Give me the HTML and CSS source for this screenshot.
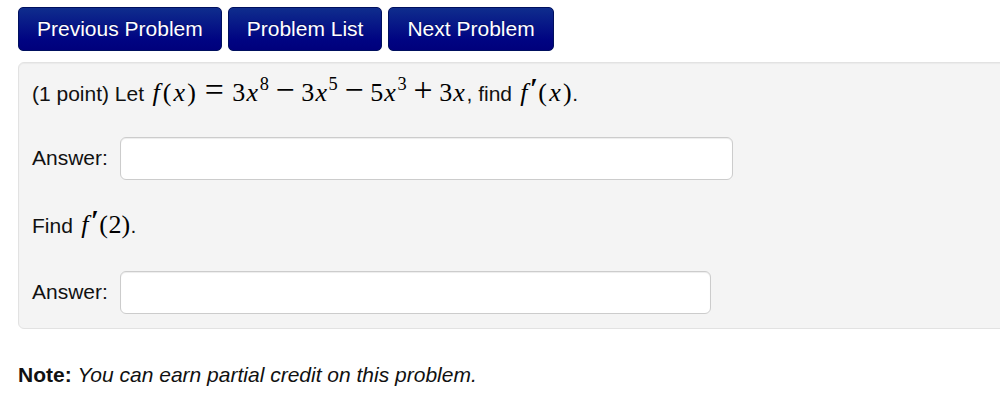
FILE: index.html
```html
<!DOCTYPE html>
<html>
<head>
<meta charset="utf-8">
<link rel="stylesheet" href="styles.css">
</head>
<body>
<div class="nav">
  <button class="btn">Previous Problem</button>
  <button class="btn">Problem List</button>
  <button class="btn">Next Problem</button>
</div>
<div class="well">
  <div class="line first">(1 point) Let <span class="math"><span class="mi f">f</span><span class="mp">(</span><span class="mi x">x</span><span class="mp">)</span><span class="rel">=</span><span class="mn">3</span><span class="mi x">x</span><span class="sup">8</span><span class="bin">−</span><span class="mn">3</span><span class="mi x">x</span><span class="sup">5</span><span class="bin">−</span><span class="mn">5</span><span class="mi x">x</span><span class="sup">3</span><span class="bin">+</span><span class="mn">3</span><span class="mi x">x</span></span>, find <span class="math"><span class="mi f">f</span><span class="prime">′</span><span class="mp">(</span><span class="mi x">x</span><span class="mp">)</span></span>.</div>
  <div class="answer"><label class="lbl">Answer:</label><input class="inp wide" type="text"></div>
  <div class="line second">Find <span class="math"><span class="mi f">f</span><span class="prime">′</span><span class="mp">(</span><span class="mn">2</span><span class="mp">)</span></span>.</div>
  <div class="answer"><label class="lbl">Answer:</label><input class="inp narrow" type="text"></div>
</div>
<p class="note"><b>Note:</b> <i>You can earn partial credit on this problem.</i></p>
</body>
</html>
```
FILE: styles.css
```css
html, body {
  margin: 0;
  padding: 0;
  overflow-x: hidden;
  background: #ffffff;
}
body {
  font-family: "Liberation Sans", Arial, sans-serif;
  font-size: 21px;
  color: #111;
}
.nav {
  display: flex;
  gap: 6px;
  padding: 7px 0 0 18px;
}
.btn {
  height: 44px;
  padding: 0 18px;
  font-family: "Liberation Sans", Arial, sans-serif;
  font-size: 21px;
  color: #fff;
  text-shadow: 0 -1px 0 rgba(0,0,0,0.3);
  background: linear-gradient(#0f2d8d, #000482 75%, #00007c);
  border: 1px solid #00105e;
  border-radius: 5px;
  cursor: pointer;
}
.well {
  margin: 11px -20px 0 18px;
  background: #f4f4f4;
  border: 1px solid #e2e2e2;
  border-radius: 6px;
  padding: 16px 13px 14px 13px;
  box-shadow: inset 0 1px 1px rgba(0,0,0,0.04);
}
.line {
  height: 30px;
  line-height: 30px;
  white-space: nowrap;
}
.line.second {
  margin-top: 31px;
}
.answer {
  display: flex;
  align-items: center;
  gap: 12px;
  margin-top: 30px;
}
.line.first + .answer {
  margin-top: 28px;
}
.lbl {
  line-height: 30px;
  position: relative;
  top: -1px;
}
.inp {
  height: 43px;
  box-sizing: border-box;
  border: 1px solid #cccccc;
  border-radius: 6px;
  background: #fff;
  box-shadow: inset 0 1px 1px rgba(0,0,0,0.075);
  font-size: 21px;
  padding: 0 8px;
  outline: none;
}
.inp.wide { width: 613px; }
.inp.narrow { width: 591px; }
.math {
  font-family: "Liberation Serif", "Times New Roman", serif;
  font-size: 26px;
  line-height: 0;
  white-space: nowrap;
  color: #000;
}
.math > span {
  display: inline-block;
  text-align: center;
  line-height: 0;
}
.mi { font-style: italic; }
.mi.f { width: 0.47em; }
.mi.x { width: 0.572em; }
.mp { width: 0.375em; }
.mn { width: 0.48em; }
.rel { font-size: 1.3em; width: 0.58em; margin: 0 0.24em; }
.bin { font-size: 1.3em; width: 0.58em; margin: 0 0.19em; }
.sup {
  font-size: 0.707em;
  width: 0.5em;
  vertical-align: 0.6em;
}
.prime {
  width: 0.27em;
  font-family: "Liberation Serif", "DejaVu Serif", serif;
  font-size: 1.1em;
  font-weight: bold;
  vertical-align: 0.1em;
}
.note {
  margin: 31px 0 0 18px;
  line-height: 30px;
}
```
